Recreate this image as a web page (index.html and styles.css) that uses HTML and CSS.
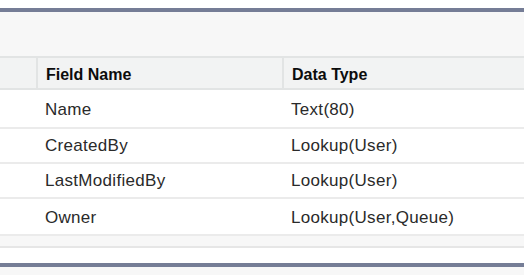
FILE: index.html
```html
<!DOCTYPE html>
<html>
<head>
<meta charset="utf-8">
<link rel="stylesheet" href="styles.css">
</head>
<body>
<div class="gap-top"></div>
<div class="bar"></div>
<div class="panel-head"></div>
<div class="grid">
  <div class="hcell sel"></div>
  <div class="hcell col">Field Name</div>
  <div class="hcell col">Data Type</div>

  <div class="cell first"></div>
  <div class="cell first name">Name</div>
  <div class="cell first type">Text(80)</div>

  <div class="cell"></div>
  <div class="cell name">CreatedBy</div>
  <div class="cell type">Lookup(User)</div>

  <div class="cell"></div>
  <div class="cell name">LastModifiedBy</div>
  <div class="cell type">Lookup(User)</div>

  <div class="cell last"></div>
  <div class="cell last name">Owner</div>
  <div class="cell last type">Lookup(User,Queue)</div>
</div>
<div class="foot"></div>
<div class="gap-mid"></div>
<div class="bar"></div>
<div class="panel-tail"></div>
</body>
</html>
```

FILE: styles.css
```css
html, body {
  margin: 0;
  padding: 0;
  background: #ffffff;
  font-family: "Liberation Sans", Arial, sans-serif;
}
.gap-top { height: 8px; }
.bar { height: 4px; background: #757d96; }
.panel-head { height: 44px; background: #f7f7f7; }
.grid {
  display: grid;
  grid-template-columns: 36px 246px 1fr;
}
.hcell {
  height: 27px;
  background: #f2f3f3;
  border-top: 2px solid #e2e4e4;
  border-bottom: 2px solid #e2e4e4;
  display: flex;
  align-items: center;
  padding-top: 3px;
  font-size: 16px;
  font-weight: bold;
  color: #0c0c0c;
}
.hcell.col {
  border-left: 2px solid #e2e4e4;
  padding-left: 8px;
}
.cell {
  height: 32px;
  padding-top: 1px;
  border-bottom: 2px solid #ebebeb;
  display: flex;
  align-items: center;
  font-size: 17px;
  letter-spacing: 0.3px;
  color: #2a2a2a;
}
.cell.first { height: 35px; padding-top: 2px; }
.cell.last { height: 33px; padding-top: 2px; }
.cell.name, .cell.type { padding-left: 9px; }
.foot {
  height: 10px;
  background: #f7f7f7;
  border-bottom: 2px solid #e6e6e6;
}
.gap-mid { height: 15px; }
.panel-tail { height: 20px; background: #f7f7f7; }
```
